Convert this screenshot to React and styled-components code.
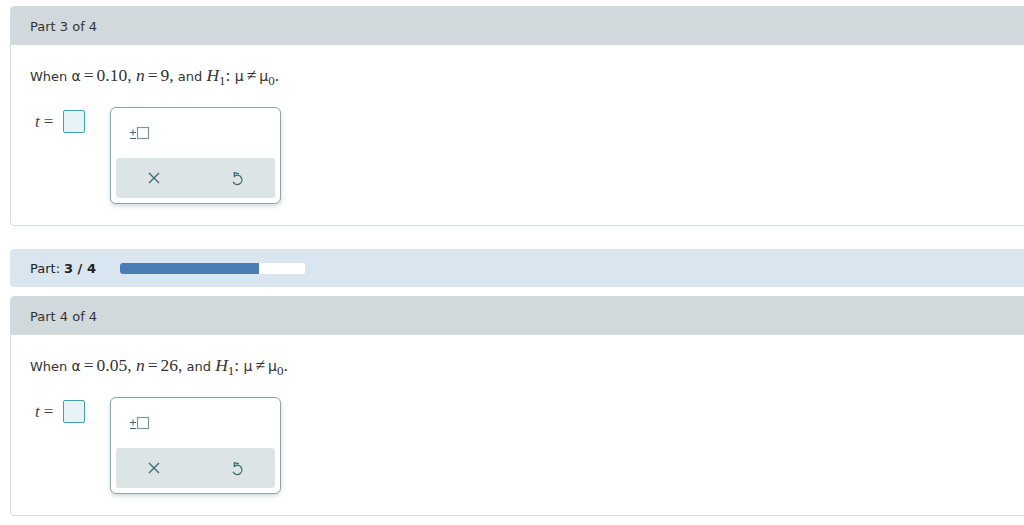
import React from 'react'
import styled, { createGlobalStyle } from 'styled-components'

const GlobalStyle = createGlobalStyle`
  html, body {
    margin: 0;
    padding: 0;
    background: #ffffff;
    overflow: hidden;
  }
  body {
    font-family: "DejaVu Sans", Verdana, sans-serif;
    color: #333333;
  }
`

const Page = styled.div`
  padding: 6px 0 0 10px;
  width: 1060px;
`

const Card = styled.section`
  border: 1px solid #d5dcdf;
  border-radius: 4px;
  overflow: hidden;
  background: #fff;
`

const CardHeader = styled.div`
  height: 38px;
  background: #d1d9dc;
  display: flex;
  align-items: center;
  padding-left: 19px;
  font-size: 13px;
`

const CardBody = styled.div`
  padding: 19px 19px 21px 19px;
`

const Question = styled.div`
  font-size: 13px;
  line-height: 22px;
  height: 22px;
  white-space: pre;
`

const M = styled.span`
  font-family: "Liberation Serif", "Times New Roman", serif;
  font-size: 17.5px;
  font-style: ${p => (p.italic ? 'italic' : 'normal')};
`

const Op = styled.span`
  font-family: "Liberation Serif", "Times New Roman", serif;
  font-size: 17.5px;
  margin: 0 3px;
`

const Greek = styled.span`
  font-family: "DejaVu Sans", Verdana, sans-serif;
  font-size: 14px;
`

const Sub = styled.sub`
  font-family: "Liberation Serif", "Times New Roman", serif;
  font-size: 13px;
  vertical-align: -4px;
  line-height: 0;
`

const AnswerRow = styled.div`
  display: flex;
  align-items: flex-start;
  margin-top: 21px;
`

const Label = styled.div`
  margin: 3px 0 0 5px;
  height: 24px;
  display: flex;
  align-items: center;
  gap: 4px;
  font-family: "Liberation Serif", "Times New Roman", serif;
  font-size: 17px;
  color: #444;
`

const AnswerBox = styled.div`
  margin: 3px 0 0 10px;
  width: 20px;
  height: 21px;
  border: 1.5px solid #3f9fae;
  border-radius: 2px;
  background: #e6f3f7;
`

const Palette = styled.div`
  margin-left: 25px;
  width: 159px;
  height: 90px;
  border: 1px solid #8ea5aa;
  border-radius: 6px;
  box-shadow: 0 2px 4px rgba(80, 100, 110, 0.25);
  background: #fff;
  padding: 0 5px 5px;
  box-sizing: content-box;
  display: flex;
  flex-direction: column;
`

const PaletteKeys = styled.div`
  flex: 1;
  display: flex;
  align-items: center;
  padding-left: 13px;
`

const Controls = styled.div`
  height: 40px;
  background: #dde4e6;
  border-radius: 3px;
  display: flex;
  align-items: center;
  justify-content: space-between;
  padding: 0 26px;
`

const IconButton = styled.div`
  width: 24px;
  height: 24px;
  display: flex;
  align-items: center;
  justify-content: center;
  color: #3e6a74;
`

const ProgressStrip = styled.div`
  margin: 23px 0 9px;
  height: 38px;
  background: #dae6ef;
  border-radius: 4px;
  display: flex;
  align-items: center;
  padding-left: 20px;
  font-size: 13px;
  color: #222;
  b {
    margin-left: 4px;
  }
`

const Track = styled.div`
  margin-left: 24px;
  width: 185px;
  height: 11px;
  background: #ffffff;
  border-radius: 2px;
  overflow: hidden;
`

const Fill = styled.div`
  height: 100%;
  background: #4a7db3;
  border-radius: 2px 0 0 2px;
`

const PlusMinusBox = () => (
  <svg width="22" height="16" viewBox="0 0 22 16">
    <g stroke="#3e6a74" strokeWidth="1" fill="none">
      <path d="M1 7.5h6M4 4.5v6M1 13.5h6" />
      <rect x="8.5" y="2.5" width="11" height="11" fill="#fff" stroke="#7f969b" strokeWidth="1.2" />
    </g>
  </svg>
)

const ClearIcon = () => (
  <svg width="14" height="14" viewBox="0 0 14 14">
    <path d="M2 2l10 10M12 2L2 12" stroke="currentColor" strokeWidth="1.4" fill="none" />
  </svg>
)

const UndoIcon = () => (
  <svg width="16" height="16" viewBox="0 0 16 16">
    <g stroke="currentColor" strokeWidth="1.3" fill="none" strokeLinecap="round" strokeLinejoin="round">
      <path d="M6.2 5.8A4.6 4.6 0 1 1 4.4 12.3" />
      <path d="M9.4 3.6L5.2 2.6L5.4 6.6" />
    </g>
  </svg>
)

const Part = ({ number, alpha, n }) => (
  <Card>
    <CardHeader>Part {number} of 4</CardHeader>
    <CardBody>
      <Question>
        When <Greek>α</Greek><Op>=</Op><M>{alpha}</M><M>, </M><M italic>n</M><Op>=</Op><M>{n}</M><M>,</M> and{' '}
        <M italic>H</M><Sub>1</Sub><M>: </M><Greek>μ</Greek><Op>≠</Op><Greek>μ</Greek><Sub>0</Sub><M>.</M>
      </Question>
      <AnswerRow>
        <Label>
          <i>t</i>
          <span>=</span>
        </Label>
        <AnswerBox />
        <Palette>
          <PaletteKeys>
            <PlusMinusBox />
          </PaletteKeys>
          <Controls>
            <IconButton>
              <ClearIcon />
            </IconButton>
            <IconButton>
              <UndoIcon />
            </IconButton>
          </Controls>
        </Palette>
      </AnswerRow>
    </CardBody>
  </Card>
)

const App = () => {
  const done = 3
  const total = 4
  return (
    <>
      <GlobalStyle />
      <Page>
        <Part number={3} alpha="0.10" n="9" />
        <ProgressStrip>
          Part:<b>{done} / {total}</b>
          <Track>
            <Fill style={{ width: `${(done / total) * 100}%` }} />
          </Track>
        </ProgressStrip>
        <Part number={4} alpha="0.05" n="26" />
      </Page>
    </>
  )
}

export default App
